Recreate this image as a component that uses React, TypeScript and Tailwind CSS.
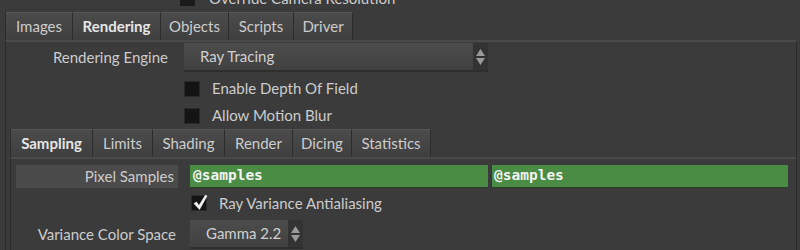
import React from 'react';

const tabBase =
  "flex items-center justify-center h-full border-r border-[#2c2c2c] bg-gradient-to-b from-[#4b4b4b] to-[#3f3f3f] border-t border-t-[#555]";

function Tab({ label, width, active }: { label: string; width: number; active?: boolean }) {
  return (
    <div
      className={`${tabBase} ${active ? 'font-bold text-[#e6e6e6]' : 'text-[#cccccc]'}`}
      style={{ width }}
    >
      {label}
    </div>
  );
}

function Check({ checked }: { checked?: boolean }) {
  return (
    <div className="relative shrink-0 w-[16px] h-[16px] bg-[#141414] border border-[#2a2a2a]">
      {checked && (
        <svg className="absolute left-[1px] -top-[2px] overflow-visible" width="15" height="17" viewBox="0 0 15 17">
          <path d="M1 9.5 L3.5 8 L6 11.5 L12.5 1 L14 2 L6.5 15.5 Z" fill="#f4f4f4" stroke="#f4f4f4" strokeWidth="0.6" strokeLinejoin="round" />
        </svg>
      )}
    </div>
  );
}

function Arrows() {
  return (
    <div className="w-[15px] h-full bg-[#333333] flex flex-col items-center justify-center gap-[2px]">
      <svg width="9" height="7" viewBox="0 0 9 7"><path d="M4.5 0 L9 7 L0 7 Z" fill="#9a9a9a" /></svg>
      <svg width="9" height="7" viewBox="0 0 9 7"><path d="M0 0 L9 0 L4.5 7 Z" fill="#9a9a9a" /></svg>
    </div>
  );
}

function Dropdown({ value, width }: { value: string; width: number }) {
  return (
    <div
      className="flex h-[29px] bg-gradient-to-b from-[#4c4c4c] to-[#414141] border-b-2 border-[#2e2e2e] text-[#d0d0d0]"
      style={{ width }}
    >
      <div className="flex-1 flex items-center pl-[16px]">{value}</div>
      <Arrows />
    </div>
  );
}

export default function App() {
  return (
    <div className="w-[800px] h-[250px] overflow-hidden bg-[#3b3b3b] text-[#cccccc] text-[15px] font-['Lato',sans-serif]">
      {/* cut-off row */}
      <div className="flex items-center h-[16px] -mt-[10px] pl-[180px] gap-[14px]">
        <div className="w-[15px] h-[15px] bg-[#1b1b1b]" />
        <span>Override Camera Resolution</span>
      </div>

      {/* main tabs */}
      <div className="flex h-[28px] mt-[6px] ml-[5px] border-l border-[#2c2c2c]">
        <Tab label="Images" width={67} />
        <Tab label="Rendering" width={88} active />
        <Tab label="Objects" width={68} />
        <Tab label="Scripts" width={65} />
        <Tab label="Driver" width={59} />
      </div>

      <div className="ml-[5px] mr-[3px] h-[300px] border-t-2 border-[#4a4a4a] border-l border-r border-l-[#2c2c2c] border-r-[#2c2c2c]">
        <div className="flex items-center h-[29px] mt-[1px]">
          <div className="w-[162px] text-right">Rendering Engine</div>
          <div className="ml-[16px]">
            <Dropdown value="Ray Tracing" width={304} />
          </div>
        </div>

        <div className="flex flex-col gap-[12px] mt-[9px] pl-[178px]">
          <div className="flex items-center gap-[12px] h-[15px]">
            <Check />
            <span>Enable Depth Of Field</span>
          </div>
          <div className="flex items-center gap-[12px] h-[15px]">
            <Check />
            <span>Allow Motion Blur</span>
          </div>
        </div>

        {/* sub tabs */}
        <div className="flex h-[28px] mt-[6px] ml-[4px] border-l border-[#2c2c2c]">
          <Tab label="Sampling" width={82} active />
          <Tab label="Limits" width={60} />
          <Tab label="Shading" width={72} />
          <Tab label="Render" width={68} />
          <Tab label="Dicing" width={59} />
          <Tab label="Statistics" width={79} />
        </div>

        <div className="ml-[4px] border-t-2 border-[#4a4a4a] border-l border-l-[#2c2c2c] h-[200px]">
          <div className="flex items-center h-[23px] mt-[6px] pl-[5px]">
            <div className="w-[162px] h-full bg-[#4b4b4b] flex items-center justify-end pr-[4px]">Pixel Samples</div>
            <div className="flex ml-[12px] h-full gap-[3px] font-['DejaVu_Sans_Mono',monospace] font-bold text-[14.5px] text-[#f2f2f2]">
              <div className="w-[298px] bg-[#4a8c43] border-b border-[#2a3d28] flex items-center pl-[3px]">@samples</div>
              <div className="w-[297px] bg-[#4a8c43] border-b border-l border-[#2a3d28] flex items-center pl-[2px]">@samples</div>
            </div>
          </div>

          <div className="flex items-center gap-[12px] h-[16px] mt-[7px] pl-[180px]">
            <Check checked />
            <span>Ray Variance Antialiasing</span>
          </div>

          <div className="flex items-center h-[29px] mt-[9px]">
            <div className="w-[165px] text-right">Variance Color Space</div>
            <div className="ml-[14px]">
              <Dropdown value="Gamma 2.2" width={113} />
            </div>
          </div>
        </div>
      </div>
    </div>
  );
}
